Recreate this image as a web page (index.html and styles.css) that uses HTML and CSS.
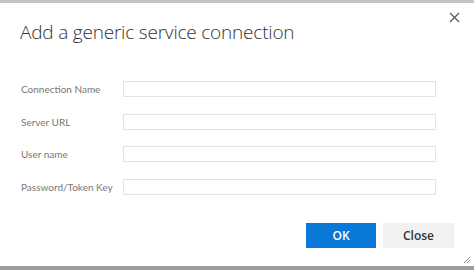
FILE: index.html
```html
<!DOCTYPE html>
<html lang="en">
<head>
<meta charset="utf-8">
<title>Add a generic service connection</title>
<link rel="stylesheet" href="styles.css">
</head>
<body>
<div class="dialog">
  <button class="close" aria-label="Close">
    <svg width="11" height="11" viewBox="0 0 11 11"><path d="M1 1L10 10M10 1L1 10" stroke="#555" stroke-width="1.2" fill="none"/></svg>
  </button>
  <h1 class="title">Add a generic service connection</h1>
  <form class="form">
    <label class="label" for="f1">Connection Name</label>
    <input class="input" id="f1" type="text">
    <label class="label" for="f2">Server URL</label>
    <input class="input" id="f2" type="text">
    <label class="label" for="f3">User name</label>
    <input class="input" id="f3" type="text">
    <label class="label" for="f4">Password/Token Key</label>
    <input class="input" id="f4" type="password">
  </form>
  <div class="footer">
    <button class="btn btn-primary" type="button">OK</button>
    <button class="btn btn-secondary" type="button">Close</button>
  </div>
  <svg class="grip" width="8" height="8" viewBox="0 0 8 8"><path d="M7 1L1 7M7 4L4 7M7 6.5L6.5 7" stroke="#888" stroke-width="1" fill="none"/></svg>
</div>
</body>
</html>
```
FILE: styles.css
```css
html, body {
  margin: 0;
  padding: 0;
  background: #ffffff;
}
.dialog {
  position: relative;
  box-sizing: border-box;
  width: 474px;
  height: 270px;
  border-top: 3px solid #c4c4c4;
  border-bottom: 4px solid #9e9e9e;
  background: #ffffff;
  font-family: "Open Sans", "Noto Sans", sans-serif;
  display: flex;
  flex-direction: column;
}
.close {
  position: absolute;
  top: 7px;
  right: 13px;
  width: 14px;
  height: 14px;
  padding: 0;
  border: 0;
  background: transparent;
  display: flex;
  align-items: center;
  justify-content: center;
}
.title {
  margin: 16px 0 0 20px;
  font-size: 19px;
  font-weight: 300;
  color: #333333;
  line-height: 26px;
  letter-spacing: -0.2px;
}
.form {
  margin: 36px 0 0 21px;
  display: grid;
  grid-template-columns: 102px 313px;
  row-gap: 16.5px;
  align-items: center;
}
.label {
  font-family: "Lato", "Open Sans", sans-serif;
  font-size: 10px;
  color: #777777;
  line-height: 16px;
}
.input {
  box-sizing: border-box;
  height: 16px;
  margin: 0;
  padding: 0 4px;
  border: 1px solid #e3e3e3;
  background: #ffffff;
  outline: none;
}
.footer {
  margin: 28.5px 20px 0 0;
  display: flex;
  justify-content: flex-end;
  gap: 7px;
}
.btn {
  height: 25px;
  width: 70px;
  border: 0;
  padding: 0;
  font-family: "Open Sans", "Noto Sans", sans-serif;
  font-size: 12px;
  font-weight: 600;
}
.btn-primary {
  background: #0a78d7;
  color: #ffffff;
}
.btn-secondary {
  width: 71px;
  background: #f1f1f1;
  color: #333333;
}
.grip {
  position: absolute;
  right: 3px;
  bottom: 2px;
}
```
